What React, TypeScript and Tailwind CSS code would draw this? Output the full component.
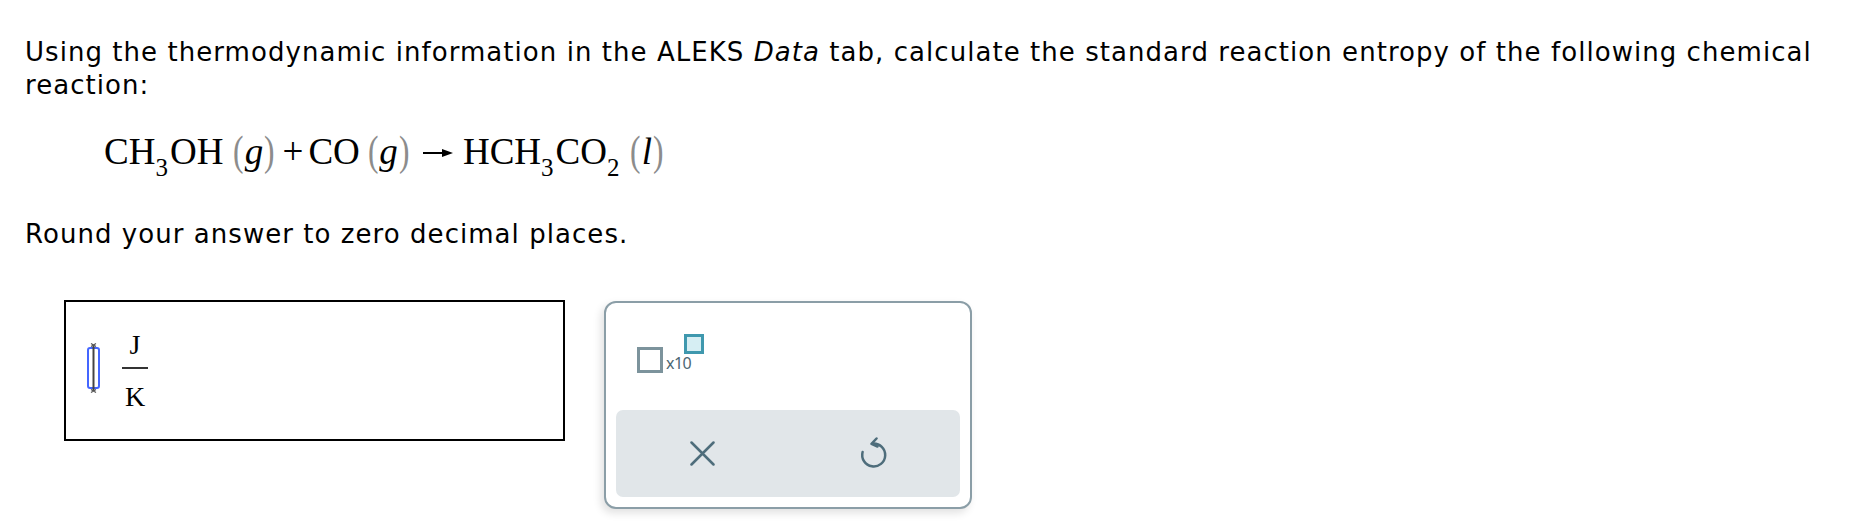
import React from 'react';

const Paren = ({ children }: { children: React.ReactNode }) => (
  <span className="inline-block text-[#8c8c8c] scale-y-[1.12] scale-x-[0.85]">{children}</span>
);

const Sub = ({ children }: { children: React.ReactNode }) => (
  <span className="relative top-[12px] text-[25px]">{children}</span>
);

const Equation = () => (
  <div className="ml-[79px] mt-[28px] h-[44px] leading-[44px] whitespace-nowrap font-['Liberation_Serif',serif] text-[37px] text-black">
    <span>CH</span>
    <Sub>3</Sub>
    <span className="ml-[2px]">OH</span>
    <span className="ml-[9px]">
      <Paren>(</Paren>
      <i>g</i>
      <Paren>)</Paren>
    </span>
    <span className="ml-[7px]">+</span>
    <span className="ml-[5px]">CO</span>
    <span className="ml-[7px]">
      <Paren>(</Paren>
      <i>g</i>
      <Paren>)</Paren>
    </span>
    <svg className="inline-block ml-[13px] align-[6px]" width="30" height="10" viewBox="0 0 30 10">
      <path d="M0 5H22" stroke="#000" strokeWidth="2" />
      <path d="M19 1 L30 5 L19 9 Z" fill="#000" />
    </svg>
    <span className="ml-[10px]">HCH</span>
    <Sub>3</Sub>
    <span className="ml-[2px]">CO</span>
    <Sub>2</Sub>
    <span className="ml-[10px]">
      <Paren>(</Paren>
      <i>l</i>
      <Paren>)</Paren>
    </span>
  </div>
);

const CursorMark = () => (
  <svg width="16" height="52" viewBox="0 0 16 52">
    <rect x="2" y="6" width="11" height="40" rx="2" fill="none" stroke="#4466ff" strokeWidth="2" />
    <path d="M7.5 3V49" stroke="#444" strokeWidth="2" />
    <path d="M5 1.5L10 4.5M10 1.5L5 4.5M5 47.5L10 50.5M10 47.5L5 50.5" stroke="#555" strokeWidth="1.2" />
  </svg>
);

const AnswerBox = () => (
  <div className="ml-[39px] w-[501px] h-[141px] border-2 border-black flex items-start pl-[20px]">
    <div className="mt-[40px]">
      <CursorMark />
    </div>
    <div className="ml-[20px] mt-[29px] flex flex-col items-center font-['Liberation_Serif',serif] text-[28px] text-black leading-[28px]">
      <span className="pb-[8px]">J</span>
      <span className="block w-[26px] h-[2px] bg-[#333]" />
      <span className="pt-[14px]">K</span>
    </div>
  </div>
);

const UndoIcon = () => (
  <svg width="30" height="33" viewBox="0 0 30 33" fill="none" stroke="#4e6d7b" strokeWidth="2.5" strokeLinecap="round" strokeLinejoin="round">
    <path d="M14 6.5 A11.5 11.5 0 1 1 3.6 15" />
    <path d="M17.5 1.5 L12.5 6.8 L18.5 9.5" />
  </svg>
);

const XIcon = () => (
  <svg width="25" height="25" viewBox="0 0 25 25" fill="none" stroke="#4e6d7b" strokeWidth="2.5" strokeLinecap="round">
    <path d="M1.5 1.5L23.5 23.5M23.5 1.5L1.5 23.5" />
  </svg>
);

const ToolPanel = () => (
  <div className="ml-[39px] mt-[1px] w-[368px] h-[208px] border-2 border-[#8b9ea7] rounded-[12px] bg-white p-[10px] flex flex-col shadow-[-3px_4px_8px_rgba(0,0,0,0.12)]">
    <div className="h-[97px] pl-[21px] pt-[21px]">
      <div className="flex items-end h-[39px] font-['Noto_Sans',sans-serif]">
        <div className="w-[26px] h-[26px] border-[3px] border-[#7c939c]" />
        <span className="ml-[3px] text-[16px] leading-none text-[#4b6673] -tracking-[0.5px] pb-[2px]">x10</span>
        <div className="self-start -ml-[7px] w-[20px] h-[20px] border-[3px] border-[#3f98ae] bg-[#d6eef3]" />
      </div>
    </div>
    <div className="flex-1 rounded-[7px] bg-[#e1e6e9] grid grid-cols-2 items-center justify-items-center">
      <XIcon />
      <UndoIcon />
    </div>
  </div>
);

export default function App() {
  return (
    <div className="w-[1858px] h-[524px] bg-white px-[25px] pt-[36px] text-black">
      <p className="font-['DejaVu_Sans',sans-serif] text-[26px] leading-[33px] tracking-[1.05px] whitespace-nowrap">
        Using the thermodynamic information in the ALEKS <i>Data</i> tab, calculate the standard reaction entropy of the following chemical
        <br />
        reaction:
      </p>
      <Equation />
      <p className="mt-[44px] font-['DejaVu_Sans',sans-serif] text-[26px] leading-[33px] tracking-[1.05px] whitespace-nowrap">
        Round your answer to zero decimal places.
      </p>
      <div className="mt-[49px] flex items-start">
        <AnswerBox />
        <ToolPanel />
      </div>
    </div>
  );
}
